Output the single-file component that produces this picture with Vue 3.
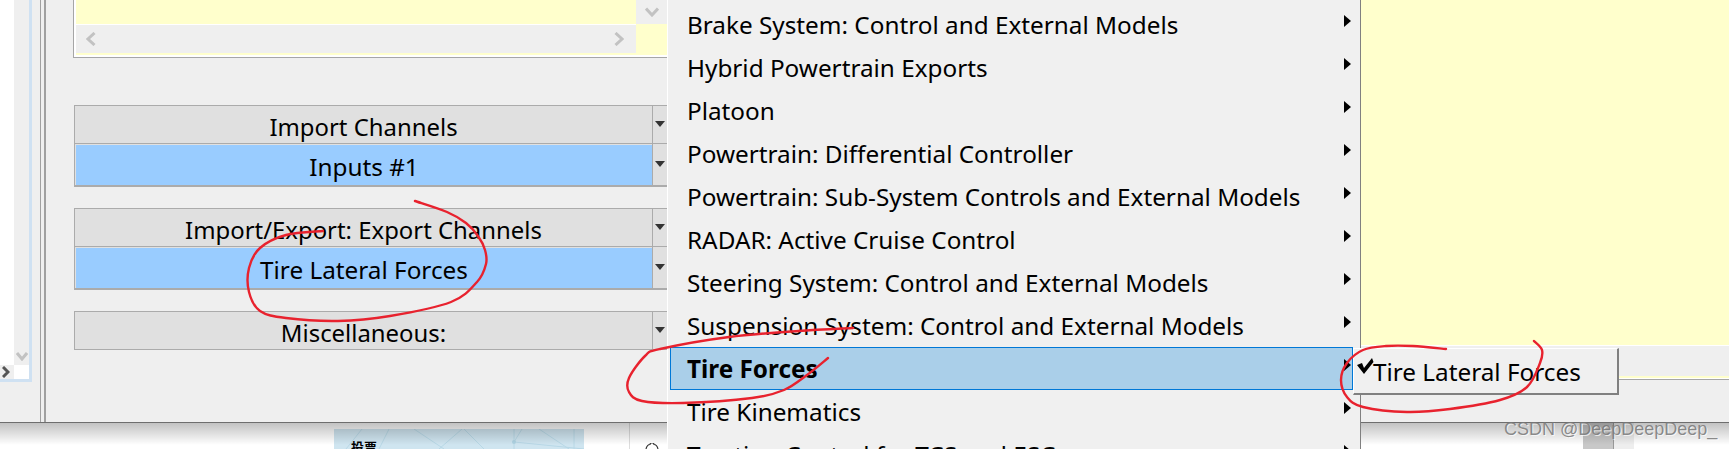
<script setup>
const menuItems = [
  { label: 'Brake System: Control and External Models' },
  { label: 'Hybrid Powertrain Exports' },
  { label: 'Platoon' },
  { label: 'Powertrain: Differential Controller' },
  { label: 'Powertrain: Sub-System Controls and External Models' },
  { label: 'RADAR: Active Cruise Control' },
  { label: 'Steering System: Control and External Models' },
  { label: 'Suspension System: Control and External Models' },
  { label: 'Tire Forces', active: true },
  { label: 'Tire Kinematics' },
  { label: 'Traction Control for TCS and ESC' }
];

const groups = [
  { title: 'Import Channels', value: 'Inputs #1' },
  { title: 'Import/Export: Export Channels', value: 'Tire Lateral Forces' },
  { title: 'Miscellaneous:' }
];

// hand-drawn red marks, traced from the screenshot
const marks = [
  [[415, 201], [447, 212], [466, 223], [478, 236], [485, 250], [486, 264], [477, 282], [451, 302], [390, 316], [338, 321], [286, 318], [260, 311], [249, 292], [249, 268], [260, 248], [286, 235], [323, 231]],
  [[853, 328], [798, 331], [729, 337], [660, 349], [645, 356], [629, 378], [629, 392], [642, 401], [683, 403], [752, 398], [784, 390], [807, 375], [828, 358]],
  [[1446, 349], [1413, 346], [1386, 346], [1363, 350], [1347, 363], [1341, 380], [1347, 397], [1363, 407], [1407, 412], [1450, 409], [1500, 400], [1527, 387], [1540, 363], [1542, 350], [1534, 341]]
];

const smooth = (pts) => {
  let d = `M${pts[0][0]} ${pts[0][1]}`;
  for (let i = 0; i < pts.length - 1; i++) {
    const p0 = pts[i - 1] || pts[i];
    const p1 = pts[i];
    const p2 = pts[i + 1];
    const p3 = pts[i + 2] || p2;
    const c1 = [p1[0] + (p2[0] - p0[0]) / 6, p1[1] + (p2[1] - p0[1]) / 6];
    const c2 = [p2[0] - (p3[0] - p1[0]) / 6, p2[1] - (p3[1] - p1[1]) / 6];
    d += ` C${c1[0]} ${c1[1]} ${c2[0]} ${c2[1]} ${p2[0]} ${p2[1]}`;
  }
  return d;
};

const markPaths = marks.map(smooth);
</script>

<template>
  <div class="screen">
    <div class="window">
      <div class="list-pane">
        <div class="list-body"></div>
        <div class="list-vscroll">
          <svg class="chev" width="12" height="9" viewBox="0 0 12 9"><path d="M1 1 L6 7 L11 1" /></svg>
        </div>
        <div class="list-hscroll">
          <svg class="chev dark" width="8" height="12" viewBox="0 0 8 12"><path d="M1 1 L6 6 L1 11" /></svg>
        </div>
        <div class="list-corner"></div>
      </div>
      <div class="splitter"></div>

      <div class="panel">
        <div class="channel-box">
          <div class="channel-view">
            <div class="sheet"></div>
            <div class="vscroll">
              <svg class="chev" width="14" height="10" viewBox="0 0 14 10"><path d="M1 1.500 L7 8 L13 1.500" /></svg>
            </div>
            <div class="hscroll">
              <svg class="chev" width="10" height="14" viewBox="0 0 10 14"><path d="M8.500 1 L2 7 L8.500 13" /></svg>
              <svg class="chev" width="10" height="14" viewBox="0 0 10 14"><path d="M1.500 1 L8 7 L1.500 13" /></svg>
            </div>
          </div>
        </div>

        <div class="groups">
          <div v-for="g in groups" :key="g.title" class="group">
            <div class="drop">
              <div class="drop-label">{{ g.title }}</div>
              <div class="drop-btn"><i class="tri"></i></div>
            </div>
            <div v-if="g.value" class="drop selected">
              <div class="drop-label">{{ g.value }}</div>
              <div class="drop-btn"><i class="tri"></i></div>
            </div>
          </div>
        </div>
      </div>

      <div class="side-pane">
        <div class="side-sheet"></div>
        <div class="side-bar"></div>
      </div>
    </div>

    <div class="page-strip">
      <div class="thumb">
        <svg class="thumb-lines" width="250" height="20" viewBox="0 0 250 20">
          <path d="M12 20 L28 0 M45 20 L55 0 M80 0 L110 20 M128 0 L105 20 M130 0 L150 20 M180 0 V20 M188 0 L180 13 M180 13 L250 20 M205 0 L235 20 M240 0 V20" />
          <circle cx="180" cy="13" r="2" />
        </svg>
        <span class="thumb-title">投票</span>
      </div>
      <div class="strip-tools">
        <svg width="16" height="6" viewBox="0 0 16 6"><path d="M2 6 C3 2 5 1.500 6 1.500 L6.500 0 H9.500 L10 1.500 C11 1.500 13 2 14 6" /></svg>
      </div>
      <div class="strip-block"></div>
    </div>

    <div class="menu">
      <div v-for="item in menuItems" :key="item.label" class="menu-item" :class="{ active: item.active }">
        <span>{{ item.label }}</span>
        <i class="sub-arrow"></i>
      </div>
    </div>

    <div class="submenu">
      <svg class="check" width="17" height="17" viewBox="0 0 17 17"><path d="M0 7 L5 5 L7 10 L15 0 L16.500 4 L7 16 Z" /></svg>
      <span>Tire Lateral Forces</span>
    </div>

    <svg class="marks" width="1729" height="449" viewBox="0 0 1729 449">
      <path v-for="(d, i) in markPaths" :key="i" :d="d" />
    </svg>

    <div class="watermark">CSDN @DeepDeepDeep_</div>
  </div>
</template>

<style>
html, body {
  margin: 0;
  overflow: hidden;
  background: #fff;
}
</style>

<style scoped>
.screen {
  position: relative;
  width: 1729px;
  height: 449px;
  overflow: hidden;
  background: #fff;
  color: #000;
  font-family: "Noto Sans", "Noto Sans CJK SC", sans-serif;
  font-size: 24.3px;
}

.window {
  display: flex;
  height: 423px;
  box-sizing: border-box;
  background: #efefef;
  border-bottom: 1px solid #6e6e6e;
}

.list-pane {
  display: grid;
  grid-template-columns: 14px 15px;
  grid-template-rows: 365px 14px;
  align-self: flex-start;
  border-right: 3px solid #cfe1f2;
  border-bottom: 3px solid #cfe1f2;
}

.list-body {
  background: #fff;
}

.list-vscroll {
  display: flex;
  align-items: flex-end;
  justify-content: center;
  padding-bottom: 4px;
}

.list-hscroll {
  display: flex;
  align-items: center;
  padding-left: 2px;
}

.list-corner {
  background: #fff;
}

.chev path {
  fill: none;
  stroke: #c2c2c2;
  stroke-width: 3;
}

.chev.dark path {
  stroke: #555;
}

.splitter {
  width: 3px;
  margin-left: 8px;
  border-left: 1px solid #a0a0a0;
  border-right: 2px solid #a0a0a0;
}

.panel {
  flex: 0 0 1315px;
  box-sizing: border-box;
  padding-left: 27px;
}

.channel-box {
  width: 594px;
  height: 58px;
  box-sizing: border-box;
  padding: 0 0 2px 2px;
  background: #fff;
  border-left: 1px solid #a6a6a6;
  border-bottom: 1px solid #a6a6a6;
}

.channel-view {
  display: grid;
  grid-template-columns: 560px 31px;
  grid-template-rows: 24px 30px;
  height: 55px;
  background: #ffffcc;
}

.vscroll {
  display: flex;
  justify-content: center;
  padding-top: 7px;
  box-sizing: border-box;
  background: #efefef;
}

.hscroll {
  display: flex;
  align-items: center;
  justify-content: space-between;
  grid-column: 1;
  height: 29px;
  box-sizing: border-box;
  padding: 0 12px 0 10px;
  background: #efefef;
  border-top: 1px solid #fff;
}

.groups {
  display: flex;
  flex-direction: column;
  gap: 21px;
  width: 593px;
  margin: 47px 0 0 1px;
}

.drop {
  display: flex;
  height: 39px;
  box-sizing: border-box;
  background: #e0e0e0;
  border: 1px solid #ababab;
  border-right: 0;
  font-size: 23.9px;
  line-height: 31px;
}

.drop.selected {
  height: 43px;
  border-top: 0;
  border-bottom-width: 2px;
  font-size: 24.3px;
  line-height: 36px;
}

.drop-label {
  flex: 1;
  padding-top: 5px;
  text-align: center;
}

.selected .drop-label {
  margin: 1px 0 0 1px;
  padding-top: 4px;
  background: #99ccff;
}

.drop-btn {
  display: flex;
  align-items: center;
  justify-content: center;
  width: 15px;
  padding-bottom: 2px;
  box-sizing: border-box;
  border-left: 1px solid #ababab;
}

.tri {
  width: 0;
  height: 0;
  border-left: 5px solid transparent;
  border-right: 5px solid transparent;
  border-top: 6px solid #333;
}

.side-pane {
  flex: 1;
  display: flex;
  flex-direction: column;
}

.side-sheet {
  height: 345px;
  background: #ffffcc;
  border-bottom: 1px solid #fff;
}

.side-bar {
  height: 30px;
  border-bottom: 2px solid #ffffcc;
  box-shadow: 0 1px 0 #fff, 0 2px 0 #a6a6a6;
}

.page-strip {
  position: relative;
  display: flex;
  height: 26px;
  overflow: hidden;
  background: #fff;
}

.page-strip::after {
  content: "";
  position: absolute;
  left: 0;
  right: 0;
  top: 0;
  height: 22px;
  background: linear-gradient(rgba(0, 0, 0, 0.24), rgba(0, 0, 0, 0));
}

.thumb {
  position: relative;
  flex: 0 0 250px;
  height: 40px;
  box-sizing: border-box;
  margin: 6px 0 0 334px;
  padding: 9px 0 0 17px;
  background: #cfe5f0;
  font-size: 13px;
  font-weight: 700;
  line-height: 18px;
}

.thumb-lines {
  position: absolute;
  left: 0;
  top: 0;
}

.thumb-lines path {
  fill: none;
  stroke: #b8d8e6;
}

.thumb-lines circle {
  fill: #aed2e2;
}

.thumb-title {
  position: relative;
}

.strip-tools {
  display: flex;
  align-items: flex-end;
  height: 26px;
  margin-left: 45px;
  padding-left: 14px;
  box-sizing: border-box;
  border-left: 1px solid #ddd;
}

.strip-tools path {
  fill: none;
  stroke: #333;
  stroke-width: 1.2;
}

.strip-block {
  width: 30px;
  margin-left: auto;
  margin-right: 115px;
  background: #c8c8c8;
  border-right: 1px solid #999;
  box-shadow: 20px 0 0 #eee;
}

.menu {
  position: absolute;
  left: 667px;
  top: 0;
  width: 694px;
  height: 449px;
  box-sizing: border-box;
  padding: 3px 7px 0 2px;
  overflow: hidden;
  background: #f0f0f0;
  border-left: 1px solid #fff;
  border-right: 1px solid #808080;
}

.menu-item {
  display: flex;
  align-items: center;
  justify-content: space-between;
  height: 43px;
  box-sizing: border-box;
  padding: 0 1px 0 16px;
  border: 1px solid transparent;
}

.menu-item.active {
  background: #aacfe9;
  border-color: #0078d7;
  font-weight: 700;
}

.sub-arrow {
  width: 0;
  height: 0;
  margin-bottom: 8px;
  border-top: 6.500px solid transparent;
  border-bottom: 6.500px solid transparent;
  border-left: 7px solid #000;
}

.submenu {
  position: absolute;
  left: 1353px;
  top: 348px;
  display: flex;
  align-items: center;
  width: 266px;
  height: 47px;
  box-sizing: border-box;
  padding-left: 3px;
  background: #f0f0f0;
  border-top: 1px solid #fff;
  border-left: 1px solid #fff;
  border-right: 2px solid #808080;
  border-bottom: 2px solid #808080;
}

.check {
  flex: none;
  margin: 0 -1px 10px 0;
}

.check path {
  fill: #000;
}

.marks {
  position: absolute;
  left: 0;
  top: 0;
  pointer-events: none;
}

.marks path {
  fill: none;
  stroke: #e8222e;
  stroke-width: 2.4;
  stroke-linecap: round;
}

.watermark {
  position: absolute;
  left: 1504px;
  top: 418px;
  font-family: "Liberation Sans", sans-serif;
  font-size: 18px;
  line-height: 22px;
  color: rgba(120, 120, 120, 0.85);
  text-shadow: 1px 1px 0 rgba(255, 255, 255, 0.7);
}
</style>
